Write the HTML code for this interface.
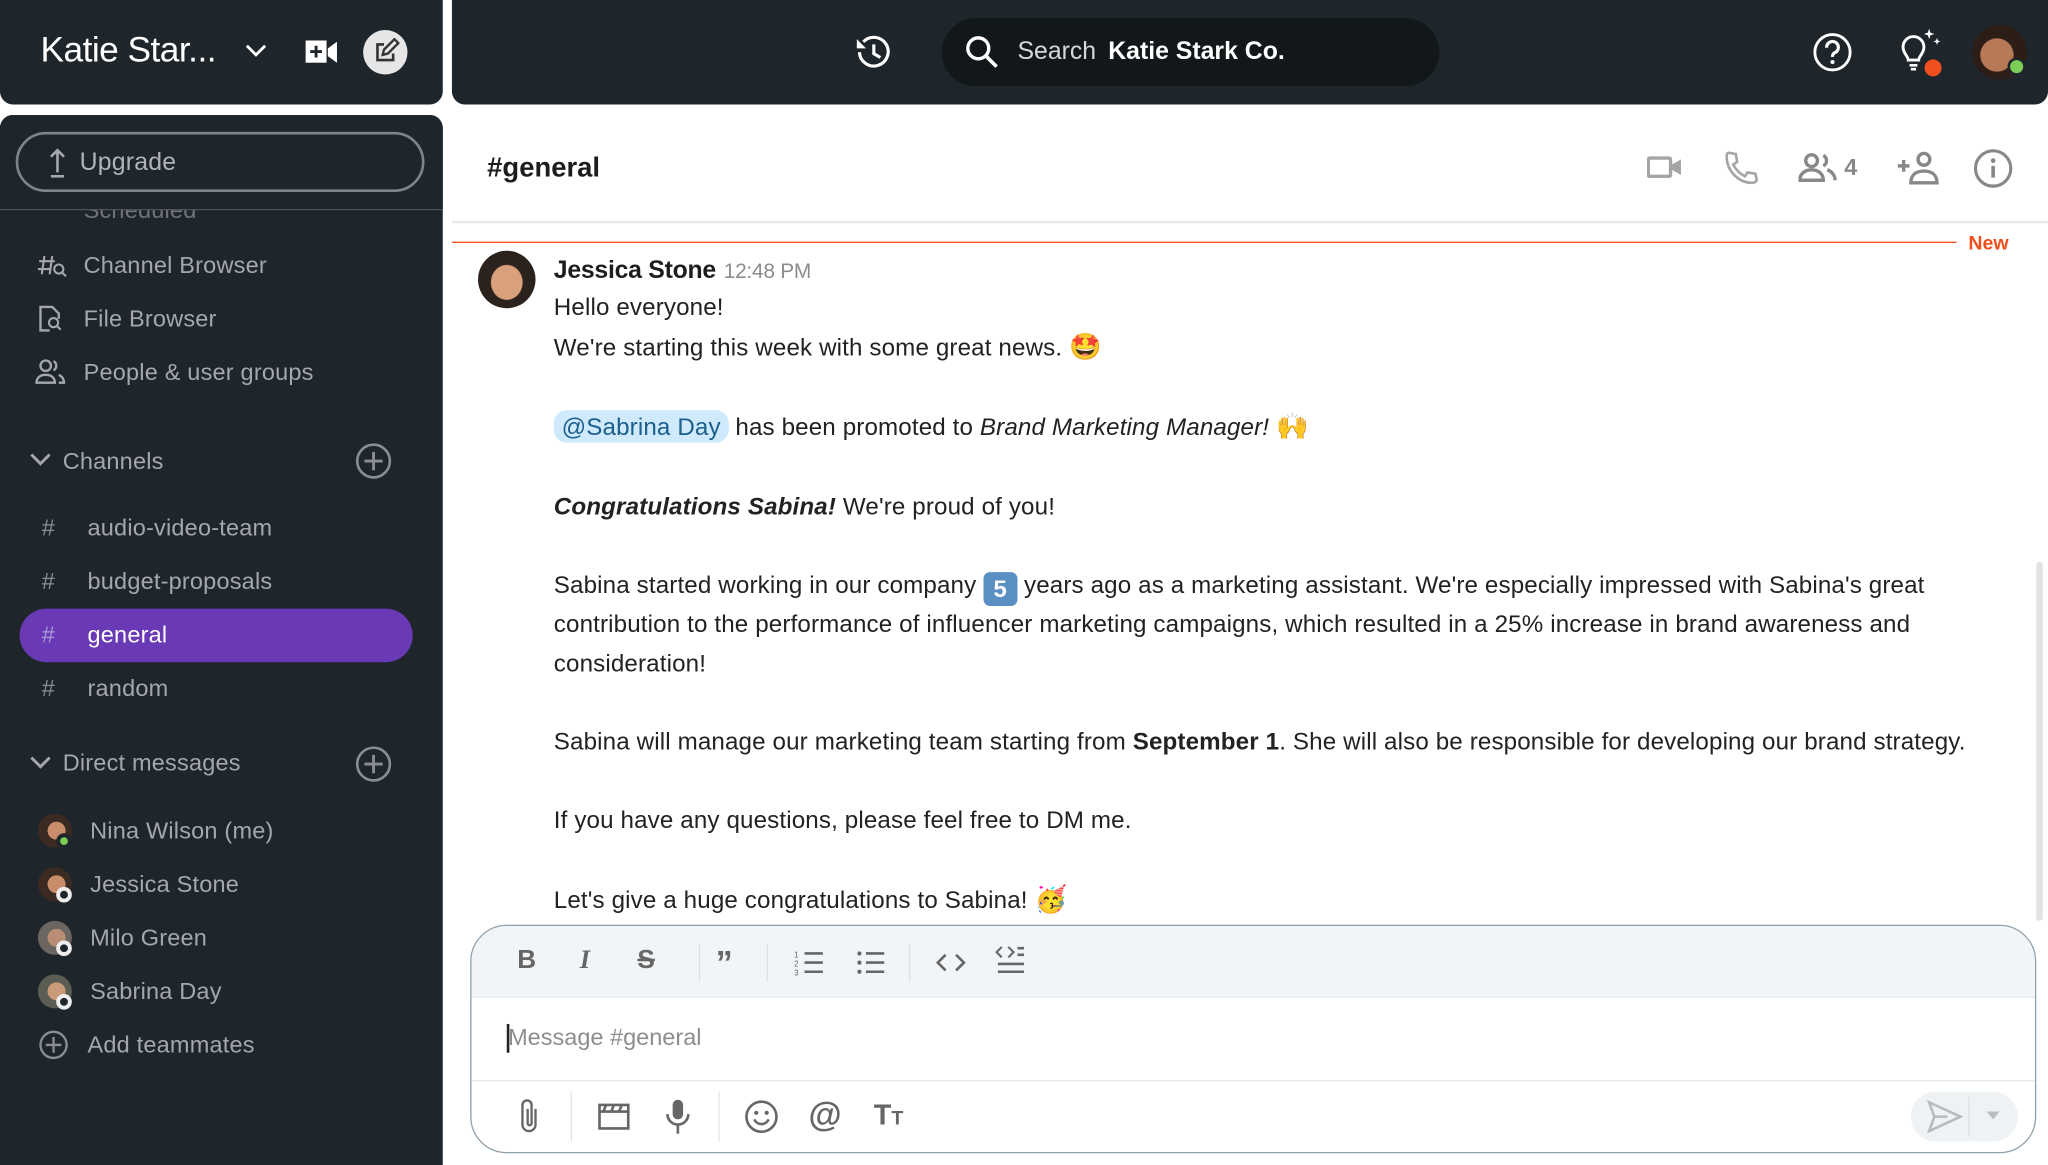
<!DOCTYPE html>
<html><head><meta charset="utf-8">
<style>
*{box-sizing:border-box;margin:0;padding:0}
html,body{width:2048px;height:1165px;overflow:hidden;background:#fff}
#w{position:absolute;left:0;top:0;width:1568px;height:892px;transform:scale(1.30612);transform-origin:0 0;font-family:"Liberation Sans",sans-serif;color:#222}
.dark{background:#1f262b;position:absolute}
.abs{position:absolute}
.side{color:#a4a8ad;font-size:18px;letter-spacing:0.15px}
.side .it{position:absolute;left:64px;white-space:nowrap}
.msg{position:absolute;left:424px;font-size:18.5px;letter-spacing:0.1px;color:#222;white-space:nowrap}
.em{font-size:20px;line-height:18px}
svg{position:absolute}
.av{position:absolute;width:26px;height:26px;border-radius:50%;background:radial-gradient(circle at 55% 50%,#c98d6b 0 35%,#3a2a22 36%)}
.st{position:absolute;width:12px;height:12px;border-radius:50%;border:3px solid #eee;background:#1f262b}
</style></head><body><div id="w">
<div class="dark" style="left:0;top:0;width:339px;height:80px;border-radius:0 0 10px 10px"></div>
<div class="abs" style="left:31px;top:23px;font-size:27px;color:#fff;letter-spacing:-0.4px">Katie Star...</div>
<svg style="left:186px;top:31px" width="20" height="16"><path d="M3 4l7 7 7-7" stroke="#fff" stroke-width="2.2" fill="none"/></svg>
<svg style="left:233px;top:29px" width="28" height="22"><rect x="1" y="2" width="16" height="17" fill="#fff"/><path d="M9 6v9M4.5 10.5h9" stroke="#1f262b" stroke-width="2.2"/><path d="M18 8l7-5v16l-7-5z" fill="#fff"/></svg>
<div class="abs" style="left:278px;top:23px;width:34px;height:34px;border-radius:50%;background:#e6e6e6"></div>
<svg style="left:284px;top:29px" width="22" height="22"><path d="M10 5H5v12h12v-5" stroke="#333" stroke-width="2" fill="none"/><path d="M9 13l1-4 8-8 3 3-8 8z" stroke="#333" stroke-width="1.8" fill="none"/></svg>
<div class="dark" style="left:346px;top:0;width:1222px;height:80px;border-radius:0 0 10px 10px"></div>
<svg style="left:652px;top:24px" width="32" height="32"><path d="M6 16a11 11 0 1 0 3-8" stroke="#fff" stroke-width="2.4" fill="none"/><path d="M4 6v7h7" fill="#fff"/><path d="M17 10v7l5 3" stroke="#fff" stroke-width="2.4" fill="none"/></svg>
<div class="abs" style="left:721px;top:14px;width:381px;height:52px;border-radius:26px;background:#12171a"></div>
<svg style="left:738px;top:26px" width="28" height="28"><circle cx="11" cy="11" r="8" stroke="#fff" stroke-width="2.6" fill="none"/><path d="M17 17l8 8" stroke="#fff" stroke-width="2.8"/></svg>
<div class="abs" style="left:779px;top:29px;font-size:19px;color:#d8d8d8">Search <b style="color:#fff;margin-left:4px">Katie Stark Co.</b></div>
<svg style="left:1387px;top:24px" width="32" height="32"><circle cx="16" cy="16" r="13.5" stroke="#fff" stroke-width="2.2" fill="none"/><path d="M11.5 12.5a4.5 4.5 0 1 1 6 4c-1.3.7-1.5 1.5-1.5 3" stroke="#fff" stroke-width="2.4" fill="none"/><circle cx="16" cy="23.5" r="1.6" fill="#fff"/></svg>
<svg style="left:1450px;top:20px" width="40" height="40"><path d="M11 26c0-3-4-5-4-10a8 8 0 0 1 16 0c0 5-4 7-4 10z" stroke="#fff" stroke-width="2.2" fill="none"/><path d="M12 30h6M13 33h4" stroke="#fff" stroke-width="2"/><path d="M27 2l1 3 3 1-3 1-1 3-1-3-3-1 3-1zM33 9l.7 2 2 .7-2 .7-.7 2-.7-2-2-.7 2-.7z" fill="#fff"/><circle cx="30" cy="32" r="6.5" fill="#f1501e"/></svg>
<div class="abs" style="left:1510px;top:19px;width:42px;height:42px;border-radius:50%;background:radial-gradient(circle at 45% 55%,#b77a56 0 38%,#2c1d17 40%)"></div>
<div class="abs" style="left:1537px;top:44px;width:14px;height:14px;border-radius:50%;background:#7ccd55;border:2px solid #1f262b"></div>
<div class="dark side" style="left:0;top:88px;width:339px;height:804px;border-radius:10px 10px 0 0">
  <div class="it" style="top:63px;left:64px;color:#707478">Scheduled</div>
  <div class="abs" style="left:0;top:0;width:339px;height:73px;background:#1f262b;border-bottom:1px solid #4d5358;border-radius:10px 10px 0 0"></div>
  <div class="abs" style="left:12px;top:13px;width:313px;height:46px;border:2px solid #7e8489;border-radius:23px"></div>
  <svg style="left:36px;top:24px" width="16" height="26"><path d="M8 20V3M3 8l5-5 5 5M3 23h10" stroke="#a4a8ad" stroke-width="2" fill="none"/></svg>
  <div class="it" style="top:26px;left:61px;color:#b0b4b8;font-size:19px">Upgrade</div>
  <div class="it" style="top:105px">Channel Browser</div>
  <div class="it" style="top:146px">File Browser</div>
  <div class="it" style="top:187px">People &amp; user groups</div>
  <svg style="left:28px;top:105px" width="24" height="20"><path d="M6 3l-2 14M12 3l-2 14M2 7h12M1 13h10" stroke="#a4a8ad" stroke-width="1.6" fill="none"/><circle cx="17" cy="13" r="3.5" stroke="#a4a8ad" stroke-width="1.6" fill="none"/><path d="M19.5 15.5l3 3" stroke="#a4a8ad" stroke-width="1.6"/></svg>
  <svg style="left:28px;top:145px" width="22" height="22"><path d="M10 20H3V2h9l5 5v4" stroke="#a4a8ad" stroke-width="1.8" fill="none"/><circle cx="13" cy="14" r="3.5" stroke="#a4a8ad" stroke-width="1.6" fill="none"/><path d="M15.5 16.5l3 3" stroke="#a4a8ad" stroke-width="1.6"/></svg>
  <svg style="left:26px;top:186px" width="26" height="22"><circle cx="9" cy="6" r="4" stroke="#a4a8ad" stroke-width="1.8" fill="none"/><path d="M2 19c0-4 3-6 7-6s7 2 7 6zM15 2.5a4 4 0 0 1 0 7M19 13c2 1 4 3 4 6h-4" stroke="#a4a8ad" stroke-width="1.8" fill="none"/></svg>
  <svg style="left:22px;top:257px" width="18" height="14"><path d="M2 3l7 7 7-7" stroke="#a4a8ad" stroke-width="2.2" fill="none"/></svg>
  <div class="it" style="top:255px;left:48px">Channels</div>
  <svg style="left:271px;top:250px" width="30" height="30"><circle cx="15" cy="15" r="12.5" stroke="#8a8e92" stroke-width="2" fill="none"/><path d="M15 8v14M8 15h14" stroke="#8a8e92" stroke-width="2.2"/></svg>
  <div class="it" style="top:306px;left:32px;color:#8a8e92">#</div><div class="it" style="top:306px;left:67px">audio-video-team</div>
  <div class="it" style="top:347px;left:32px;color:#8a8e92">#</div><div class="it" style="top:347px;left:67px">budget-proposals</div>
  <div class="abs" style="left:15px;top:378px;width:301px;height:41px;border-radius:21px;background:#6939b6"></div>
  <div class="it" style="top:388px;left:32px;color:#a999d8">#</div><div class="it" style="top:388px;left:67px;color:#fff">general</div>
  <div class="it" style="top:429px;left:32px;color:#8a8e92">#</div><div class="it" style="top:429px;left:67px">random</div>
  <svg style="left:22px;top:489px" width="18" height="14"><path d="M2 3l7 7 7-7" stroke="#a4a8ad" stroke-width="2.2" fill="none"/></svg>
  <div class="it" style="top:486px;left:48px">Direct messages</div>
  <svg style="left:271px;top:482px" width="30" height="30"><circle cx="15" cy="15" r="12.5" stroke="#8a8e92" stroke-width="2" fill="none"/><path d="M15 8v14M8 15h14" stroke="#8a8e92" stroke-width="2.2"/></svg>
  <div class="av" style="left:29px;top:535px"></div><div class="st" style="left:43px;top:550px;background:#7ccd55;border-color:#1f262b"></div><div class="it" style="top:538px;left:69px">Nina Wilson (me)</div>
  <div class="av" style="left:29px;top:576px"></div><div class="st" style="left:43px;top:591px"></div><div class="it" style="top:579px;left:69px">Jessica Stone</div>
  <div class="av" style="left:29px;top:617px;background:radial-gradient(circle at 55% 50%,#b88d73 0 35%,#6b6661 36%)"></div><div class="st" style="left:43px;top:632px"></div><div class="it" style="top:620px;left:69px">Milo Green</div>
  <div class="av" style="left:29px;top:658px;background:radial-gradient(circle at 55% 50%,#c99a78 0 35%,#5b5d52 36%)"></div><div class="st" style="left:43px;top:673px"></div><div class="it" style="top:661px;left:69px">Sabrina Day</div>
  <svg style="left:29px;top:700px" width="24" height="24"><circle cx="12" cy="12" r="10" stroke="#8a8e92" stroke-width="1.8" fill="none"/><path d="M12 6v12M6 12h12" stroke="#8a8e92" stroke-width="1.8"/></svg>
  <div class="it" style="top:702px;left:67px">Add teammates</div>
</div>
<div class="abs" style="left:373px;top:117px;font-size:21px;font-weight:bold;color:#1d1d1d">#general</div>
<svg style="left:1261px;top:117px" width="28" height="22"><rect x="1" y="4" width="17" height="14" rx="1" fill="none" stroke="#a5a5a5" stroke-width="2.6"/><path d="M19 9l7-4v12l-7-4z" fill="#a5a5a5"/></svg>
<svg style="left:1318px;top:114px" width="30" height="30"><path d="M6 3l5 1 1 6-3 2c2 4 5 7 9 9l2-3 6 1 1 5c-1 2-3 2-5 2C12 25 4 16 4 6c0-2 0-3 2-3z" stroke="#a5a5a5" stroke-width="2" fill="none"/></svg>
<svg style="left:1377px;top:116px" width="32" height="26"><circle cx="10" cy="7" r="4.5" stroke="#888" stroke-width="2.6" fill="none"/><path d="M1 22c0-5 4-8 9-8s9 3 9 8z" stroke="#888" stroke-width="2.6" fill="none"/><path d="M19 3a4.5 4.5 0 0 1 0 8M22 14c3 1 6 4 6 8" stroke="#888" stroke-width="2.6" fill="none"/></svg>
<div class="abs" style="left:1412px;top:118px;font-size:18px;font-weight:bold;color:#888">4</div>
<svg style="left:1452px;top:115px" width="34" height="28"><path d="M1 12h9M5.5 7.5v9" stroke="#888" stroke-width="2.6"/><circle cx="21" cy="7" r="4.5" stroke="#888" stroke-width="2.6" fill="none"/><path d="M11 25c0-6 4-9 10-9s10 3 10 9z" stroke="#888" stroke-width="2.6" fill="none"/></svg>
<svg style="left:1510px;top:113px" width="32" height="32"><circle cx="16" cy="16" r="13.5" stroke="#888" stroke-width="2.4" fill="none"/><circle cx="16" cy="10" r="1.8" fill="#888"/><path d="M16 14v9" stroke="#888" stroke-width="2.8"/></svg>
<div class="abs" style="left:346px;top:169px;width:1222px;height:2px;background:#e5e9ec"></div>
<div class="abs" style="left:346px;top:185px;width:1152px;height:1px;background:#f1501e"></div>
<div class="abs" style="left:1507px;top:178px;font-size:15px;font-weight:bold;color:#f1501e">New</div>
<div class="abs" style="left:366px;top:192px;width:44px;height:44px;border-radius:50%;background:radial-gradient(ellipse at 50% 55%,#d9a07c 0 38%,#2b211d 40%)"></div>
<div class="msg" style="top:196px;letter-spacing:-0.2px"><b style="font-size:19px;color:#1d1d1d">Jessica Stone</b> <span style="font-size:16px;color:#8c8c8c;margin-left:1px">12:48 PM</span></div>
<div class="msg" style="top:224px">Hello everyone!</div>
<div class="msg" style="top:255px">We're starting this week with some great news. <span class="em">🤩</span></div>
<div class="msg" style="top:316px"><span style="background:#cfeafc;color:#1b5f8c;border-radius:10px;padding:2px 6px">@Sabrina Day</span> has been promoted to <i>Brand Marketing Manager!</i> <span class="em">🙌</span></div>
<div class="msg" style="top:377px"><b><i>Congratulations Sabina!</i></b> We're proud of you!</div>
<div class="msg" style="top:437px">Sabina started working in our company <span style="display:inline-block;width:26px;height:26px;border-radius:5px;background:#5a8fc4;color:#fff;text-align:center;font-weight:bold;line-height:26px;vertical-align:-3px">5</span> years ago as a marketing assistant. We're especially impressed with Sabina's great</div>
<div class="msg" style="top:467px">contribution to the performance of influencer marketing campaigns, which resulted in a 25% increase in brand awareness and</div>
<div class="msg" style="top:497px">consideration!</div>
<div class="msg" style="top:557px">Sabina will manage our marketing team starting from <b>September 1</b>. She will also be responsible for developing our brand strategy.</div>
<div class="msg" style="top:617px">If you have any questions, please feel free to DM me.</div>
<div class="msg" style="top:678px">Let's give a huge congratulations to Sabina! <span class="em">🥳</span></div>
<div class="abs" style="left:1559px;top:430px;width:5px;height:275px;border-radius:3px;background:#e2e2e2"></div>
<div class="abs" style="left:360px;top:708px;width:1199px;height:175px;border:1.5px solid #8fa0ab;border-radius:28px;overflow:hidden;background:#fff">
  <div style="height:55px;background:#f2f5f7;border-bottom:1px solid #e8ebee"></div>
  <div style="position:absolute;top:118px;left:0;width:100%;height:1px;background:#e3e7ea"></div>
</div>
<div class="abs" style="left:396px;top:724px;font-size:20px;font-weight:bold;color:#666">B</div>
<div class="abs" style="left:444px;top:724px;font-size:20px;font-style:italic;font-family:'Liberation Serif',serif;font-weight:bold;color:#666">I</div>
<div class="abs" style="left:488px;top:724px;font-size:20px;color:#666;text-decoration:line-through;font-weight:bold">S</div>
<div class="abs" style="left:535px;top:722px;width:1px;height:30px;background:#dde1e4"></div>
<div class="abs" style="left:548px;top:724px;font-size:26px;font-weight:bold;color:#666;line-height:26px">”</div>
<div class="abs" style="left:587px;top:722px;width:1px;height:30px;background:#dde1e4"></div>
<svg style="left:608px;top:727px" width="24" height="20"><path d="M8 3h14M8 10h14M8 17h14" stroke="#666" stroke-width="2"/><text x="0" y="6" font-size="6" fill="#666" font-family="Liberation Sans">1</text><text x="0" y="13" font-size="6" fill="#666" font-family="Liberation Sans">2</text><text x="0" y="20" font-size="6" fill="#666" font-family="Liberation Sans">3</text></svg>
<svg style="left:655px;top:727px" width="24" height="20"><path d="M8 3h14M8 10h14M8 17h14" stroke="#666" stroke-width="2"/><circle cx="3" cy="3" r="1.6" fill="#666"/><circle cx="3" cy="10" r="1.6" fill="#666"/><circle cx="3" cy="17" r="1.6" fill="#666"/></svg>
<div class="abs" style="left:696px;top:722px;width:1px;height:30px;background:#dde1e4"></div>
<svg style="left:716px;top:727px" width="24" height="20"><path d="M8 4l-6 6 6 6M16 4l6 6-6 6" stroke="#666" stroke-width="2" fill="none"/></svg>
<svg style="left:762px;top:723px" width="24" height="26"><path d="M5 2l-4 4 4 4M10 2l4 4-4 4" stroke="#666" stroke-width="1.6" fill="none"/><path d="M17 3h5M17 8h5M2 15h20M2 21h20" stroke="#666" stroke-width="2"/></svg>
<div class="abs" style="left:388px;top:784px;width:1.5px;height:22px;background:#222"></div>
<div class="abs" style="left:389px;top:784px;font-size:18px;color:#8d8d8d">Message #general</div>
<svg style="left:396px;top:840px" width="20" height="30"><path d="M14 9v12a5 5 0 0 1-10 0V6a3.5 3.5 0 0 1 7 0v14a1.5 1.5 0 0 1-3 0V9" stroke="#666" stroke-width="1.8" fill="none"/></svg>
<div class="abs" style="left:437px;top:836px;width:1px;height:38px;background:#e3e7ea"></div>
<svg style="left:456px;top:843px" width="28" height="24"><path d="M3 8h22v13H3zM3 8V3h22v5M8 3l-2 5M14 3l-2 5M20 3l-2 5" stroke="#666" stroke-width="2" fill="none"/></svg>
<svg style="left:508px;top:840px" width="22" height="30"><rect x="7" y="2" width="8" height="15" rx="4" fill="#666"/><path d="M3 13a8 8 0 0 0 16 0M11 21v7" stroke="#666" stroke-width="2" fill="none"/></svg>
<div class="abs" style="left:550px;top:836px;width:1px;height:38px;background:#e3e7ea"></div>
<svg style="left:569px;top:841px" width="28" height="28"><circle cx="14" cy="14" r="11.5" stroke="#666" stroke-width="2" fill="none"/><circle cx="10" cy="11" r="1.6" fill="#666"/><circle cx="18" cy="11" r="1.6" fill="#666"/><path d="M8.5 16a6 6 0 0 0 11 0" stroke="#666" stroke-width="2" fill="none"/></svg>
<div class="abs" style="left:619px;top:838px;font-size:26px;font-weight:bold;color:#666">@</div>
<div class="abs" style="left:669px;top:841px;font-size:22px;font-weight:bold;color:#666">T<span style="font-size:15px">T</span></div>
<div class="abs" style="left:1463px;top:836px;width:82px;height:38px;border-radius:19px;background:#eff2f4"></div>
<div class="abs" style="left:1507px;top:840px;width:1px;height:30px;background:#dde1e4"></div>
<svg style="left:1475px;top:842px" width="28" height="26"><path d="M2 2l24 11L2 24l4-11z M6 13h10" stroke="#b8bcc0" stroke-width="2" fill="none"/></svg>
<svg style="left:1519px;top:849px" width="14" height="10"><path d="M2 2h10l-5 6z" fill="#b8bcc0"/></svg>
</div></body></html>
